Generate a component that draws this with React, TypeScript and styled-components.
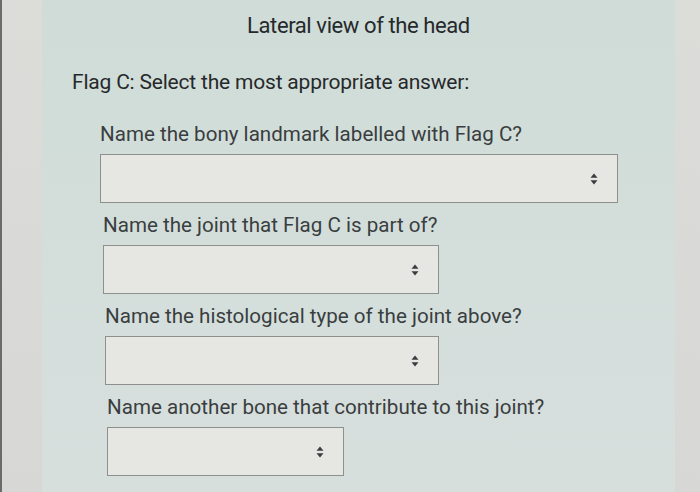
import React from 'react';
import styled, { createGlobalStyle } from 'styled-components';

const GlobalStyle = createGlobalStyle`
  html, body {
    margin: 0;
    padding: 0;
    background: #d9dad7;
  }
  body {
    font-family: Roboto, "Liberation Sans", sans-serif;
  }
`;

const Screen = styled.div`
  display: flex;
  flex-direction: row;
  width: 700px;
  height: 492px;
  overflow: hidden;
`;

const SideStrip = styled.div<{ $w: number; $edge?: boolean }>`
  width: ${(p) => p.$w}px;
  flex-shrink: 0;
  background: linear-gradient(180deg, #dcdcd9 0%, #d7d8d5 100%);
  ${(p) => (p.$edge ? 'border-left: 2px solid #6b6b6b;' : '')}
`;

const Panel = styled.div`
  flex: 1;
  display: flex;
  flex-direction: column;
  background: linear-gradient(180deg, #cfdcd7 0%, #d3dedb 45%, #d7dfdd 100%);
  color: #2f3335;
`;

const Title = styled.h1`
  margin: 13px 0 0;
  text-align: center;
  font-size: 22px;
  font-weight: 400;
  letter-spacing: -0.4px;
  line-height: 26px;
  color: #26292b;
`;

const Lead = styled.h2`
  margin: 30px 0 0 30px;
  font-size: 21px;
  font-weight: 400;
  letter-spacing: -0.2px;
  line-height: 26px;
  color: #26292b;
`;

const Questions = styled.div`
  display: flex;
  flex-direction: column;
  margin-top: 27px;
`;

const Question = styled.div<{ $shift: number }>`
  display: flex;
  flex-direction: column;
  margin-left: ${(p) => 58 + p.$shift}px;
  margin-bottom: 10px;
`;

const Label = styled.label`
  font-size: 20.6px;
  line-height: 24px;
  color: #3a3e40;
  margin-bottom: 8px;
`;

const SelectBox = styled.div<{ $w: number }>`
  display: flex;
  align-items: center;
  justify-content: flex-end;
  box-sizing: border-box;
  width: ${(p) => p.$w}px;
  height: 49px;
  padding-right: 19px;
  background: #e6e7e3;
  border: 1.5px solid #8e908e;
`;

const Arrows = () => (
  <svg width="8" height="12" viewBox="0 0 8 12">
    <path d="M4 0.5 L7.5 4.8 L0.5 4.8 Z" fill="#3a3d3f" />
    <path d="M4 11.5 L7.5 7.2 L0.5 7.2 Z" fill="#3a3d3f" />
  </svg>
);

const items = [
  { text: 'Name the bony landmark labelled with Flag C?', w: 518, shift: 0 },
  { text: 'Name the joint that Flag C is part of?', w: 336, shift: 3 },
  { text: 'Name the histological type of the joint above?', w: 334, shift: 5 },
  { text: 'Name another bone that contribute to this joint?', w: 237, shift: 7 },
];

export default function App() {
  return (
    <>
      <GlobalStyle />
      <Screen>
        <SideStrip $w={40} $edge />
        <Panel>
          <Title>Lateral view of the head</Title>
          <Lead>Flag C: Select the most appropriate answer:</Lead>
          <Questions>
            {items.map((q) => (
              <Question key={q.text} $shift={q.shift}>
                <Label>{q.text}</Label>
                <SelectBox $w={q.w}>
                  <Arrows />
                </SelectBox>
              </Question>
            ))}
          </Questions>
        </Panel>
        <SideStrip $w={25} />
      </Screen>
    </>
  );
}
